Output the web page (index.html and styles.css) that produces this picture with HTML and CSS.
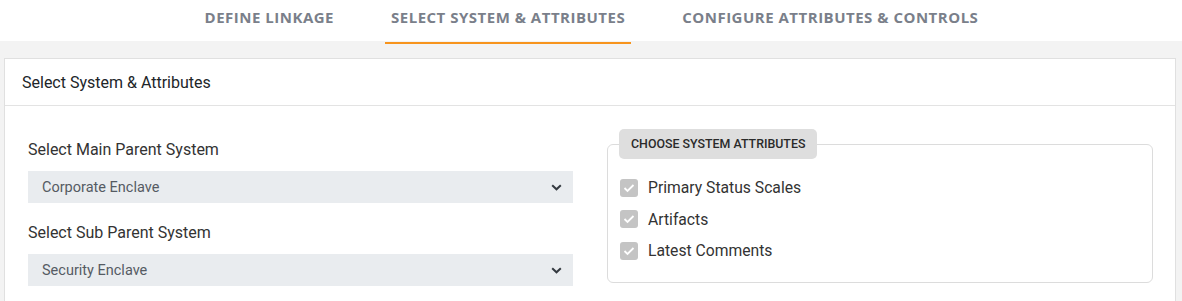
FILE: index.html
```html
<!DOCTYPE html>
<html>
<head>
<meta charset="utf-8">
<link rel="stylesheet" href="styles.css">
</head>
<body>
<nav class="tabs">
  <div class="tab">DEFINE LINKAGE</div>
  <div class="tab active">SELECT SYSTEM &amp; ATTRIBUTES</div>
  <div class="tab">CONFIGURE ATTRIBUTES &amp; CONTROLS</div>
</nav>
<main class="page">
  <section class="card">
    <header class="card-header">Select System &amp; Attributes</header>
    <div class="card-body">
      <div class="left">
        <label class="field-label">Select Main Parent System</label>
        <div class="select">
          <span>Corporate Enclave</span>
          <svg class="chev" width="11" height="7" viewBox="0 0 11 7"><path d="M1.2 1.2 L5.5 5.3 L9.8 1.2" fill="none" stroke="#343a40" stroke-width="2"/></svg>
        </div>
        <label class="field-label second">Select Sub Parent System</label>
        <div class="select">
          <span>Security Enclave</span>
          <svg class="chev" width="11" height="7" viewBox="0 0 11 7"><path d="M1.2 1.2 L5.5 5.3 L9.8 1.2" fill="none" stroke="#343a40" stroke-width="2"/></svg>
        </div>
      </div>
      <div class="right">
        <fieldset class="attrs">
          <legend class="legend">CHOOSE SYSTEM ATTRIBUTES</legend>
          <div class="check-row"><span class="box"><svg width="12" height="10" viewBox="0 0 12 10"><path d="M1.5 5 L4.5 8 L10.5 2" fill="none" stroke="#fff" stroke-width="1.8"/></svg></span>Primary Status Scales</div>
          <div class="check-row"><span class="box"><svg width="12" height="10" viewBox="0 0 12 10"><path d="M1.5 5 L4.5 8 L10.5 2" fill="none" stroke="#fff" stroke-width="1.8"/></svg></span>Artifacts</div>
          <div class="check-row"><span class="box"><svg width="12" height="10" viewBox="0 0 12 10"><path d="M1.5 5 L4.5 8 L10.5 2" fill="none" stroke="#fff" stroke-width="1.8"/></svg></span>Latest Comments</div>
        </fieldset>
      </div>
    </div>
  </section>
</main>
</body>
</html>
```

FILE: styles.css
```css
* { box-sizing: border-box; }
html, body { margin: 0; padding: 0; }
body {
  background: #f3f3f3;
  font-family: Roboto, "Liberation Sans", sans-serif;
  height: 301px;
  overflow: hidden;
}
.tabs {
  background: #fff;
  height: 41px;
  display: flex;
  justify-content: center;
  gap: 45px;
  padding-left: 1px;
}
.tab {
  font-family: "Open Sans", "DejaVu Sans", sans-serif;
  font-weight: 700;
  font-size: 15px;
  letter-spacing: 0.5px;
  color: #7a7f8a;
  padding: 0 6px;
  line-height: 35px;
  position: relative;
}
.tab.active::after {
  content: "";
  position: absolute;
  left: 0; right: 0;
  bottom: -3px;
  height: 2px;
  background: #f7941d;
}
.page { padding: 17px 6px 0 4px; }
.card {
  background: #fff;
  border: 1px solid #e0e0e0;
  border-bottom: none;
  height: 260px;
}
.card-header {
  height: 47px;
  border-bottom: 1px solid #e3e3e3;
  padding: 0 17px;
  display: flex;
  align-items: center;
  font-size: 16px;
  font-weight: 400;
  color: #212529;
}
.card-body {
  display: flex;
  padding: 23px 22px 0 23px;
}
.left { width: 545px; }
.right { margin-left: 34px; flex: 1; }
.field-label {
  display: block;
  font-size: 16px;
  color: #333;
  line-height: 20px;
  margin-top: 11px;
  margin-bottom: 11px;
}
.field-label.second { margin-top: 20px; }
.select {
  height: 32px;
  background: #e9ecef;
  display: flex;
  align-items: center;
  justify-content: space-between;
  padding: 0 11px 0 14px;
  font-size: 14.5px;
  color: #555b63;
}
.attrs {
  margin: 0;
  border: 1px solid #dcdcdc;
  border-radius: 6px;
  padding: 13px 12px 15px 12px;
  min-width: 0;
  height: 154px;
}
.legend {
  background: #dedede;
  border-radius: 5px;
  padding: 0 12px;
  height: 30px;
  line-height: 30px;
  font-size: 12.4px;
  font-weight: 500;
  color: #2a2a2a;
  margin-left: -1px;
}
.check-row {
  display: flex;
  align-items: center;
  height: 31.5px;
  font-size: 15.7px;
  color: #333;
}
.box {
  width: 18px;
  height: 18px;
  background: #c4c4c4;
  border-radius: 3px;
  display: inline-flex;
  align-items: center;
  justify-content: center;
  margin-right: 10px;
}
```
